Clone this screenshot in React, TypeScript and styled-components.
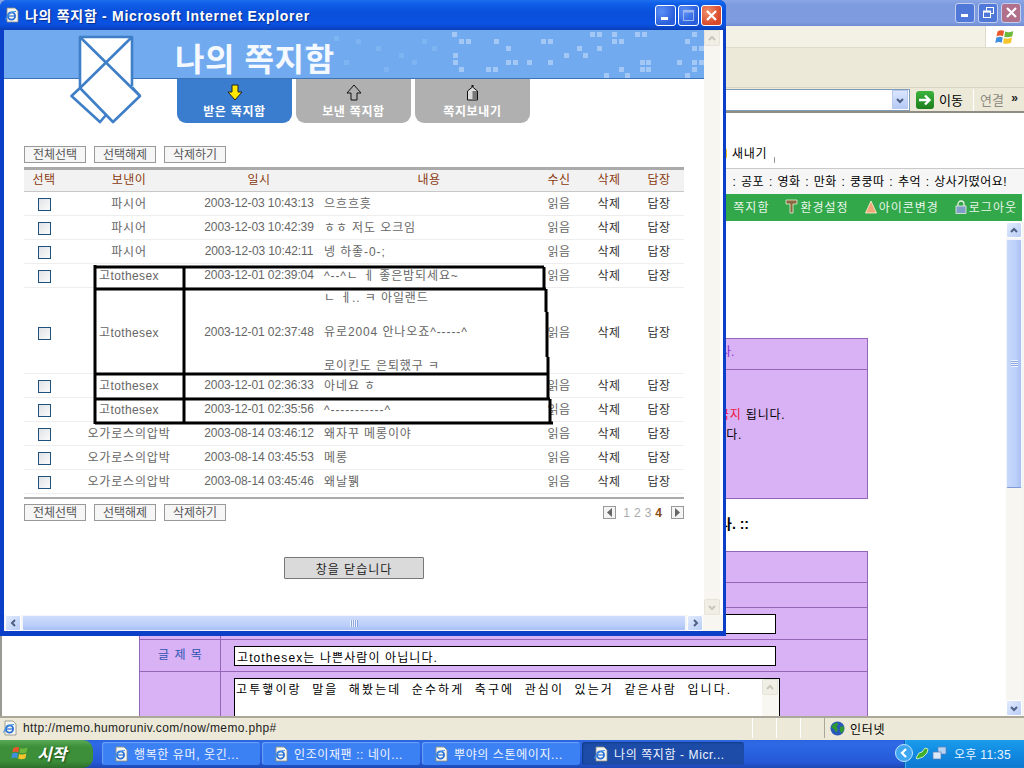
import React from "react";
import styled, { createGlobalStyle } from "styled-components";

const GlobalStyle = createGlobalStyle`
  html, body {
    margin: 0;
    padding: 0;
    background: #fff;
  }
  body {
    font-family: "Liberation Sans", "Noto Sans CJK KR", sans-serif;
    font-size: 12px;
    color: #000;
  }
  * {
    box-sizing: border-box;
  }
`;

const Desktop = styled.div`
  position: relative;
  width: 1024px;
  height: 768px;
  overflow: hidden;
  display: flex;
  flex-direction: column;
`;

/* window behind the popup */
const BackTitle = styled.div`
  height: 26px;
  flex: none;
  display: flex;
  justify-content: flex-end;
  align-items: center;
  gap: 3px;
  padding: 0 3px 1px 0;
  background: linear-gradient(#8aa6e6, #7c9ade 20%, #7f9ce0 85%, #6f8cd2);
`;

const MenuBar = styled.div`
  height: 22px;
  flex: none;
  display: flex;
  justify-content: flex-end;
  background: #f3f0e6;
  border-bottom: 1px solid #dedbcb;
`;

const FlagBox = styled.div`
  width: 39px;
  background: #fff;
  border-left: 1px solid #dedbcb;
  display: flex;
  align-items: center;
  justify-content: center;
`;

const ToolBar = styled.div`
  height: 40px;
  flex: none;
  background: #ece9d8;
  border-bottom: 1px solid #d8d4c2;
`;

const AddressBar = styled.div`
  height: 25px;
  flex: none;
  display: flex;
  align-items: center;
  background: #ece9d8;
  border-bottom: 2px solid #8f8d83;
`;

const AddressInput = styled.div`
  width: 910px;
  height: 22px;
  padding-right: 1px;
  display: flex;
  justify-content: flex-end;
  align-items: center;
  background: #fff;
  border: 1px solid #7f9db9;
`;

const ComboArrow = styled.div`
  width: 16px;
  height: 19px;
  display: flex;
  align-items: center;
  justify-content: center;
  background: linear-gradient(#dbe6fd, #b6caf5);
  border: 1px solid #b8c9ef;
`;

const GoButton = styled.div`
  margin-left: 6px;
  display: flex;
  align-items: center;
  gap: 5px;
  width: 57px;
  height: 22px;
  font-size: 13px;
`;

const GoIcon = styled.div`
  width: 18px;
  height: 18px;
  border-radius: 3px;
  background: linear-gradient(#3cb43c, #1c7d1c);
  display: flex;
  align-items: center;
  justify-content: center;
`;

const LinksLabel = styled.div`
  flex: 1;
  height: 22px;
  display: flex;
  align-items: center;
  justify-content: space-between;
  padding: 0 6px 0 6px;
  font-size: 13px;
  color: #8c8a80;
  border-left: 1px solid #fff;
`;

const Chevrons = styled.span`
  font-weight: bold;
  font-size: 12px;
  color: #222;
  margin-top: -4px;
`;

const TopFrame = styled.div`
  height: 109px;
  flex: none;
  display: flex;
  flex-direction: column;
  background: #fff;
`;

const MenuSlot = styled.div`
  height: 56px;
  flex: none;
  display: flex;
  align-items: flex-end;
  gap: 5px;
  padding: 0 0 7px 724px;
  font-size: 12px;
  letter-spacing: 0.7px;
  border-bottom: 1px solid #c9c9c9;
`;

const FolderEdge = styled.span`
  width: 3px;
  height: 9px;
  margin-bottom: 3px;
  background: #f2c230;
`;

const MenuTick = styled.span`
  width: 1px;
  height: 6px;
  margin-left: 2px;
  margin-bottom: -2px;
  background: #999;
`;

const NavStrip = styled.div`
  height: 25px;
  flex: none;
  padding: 0 17px 2px 0;
  display: flex;
  align-items: center;
  justify-content: flex-end;
  background: #f6f6f6;
  font-size: 12px;
  letter-spacing: 0.45px;
  word-spacing: 1px;
  white-space: nowrap;
`;

const GreenBar = styled.div`
  height: 27px;
  flex: none;
  margin-right: 2px;
  display: flex;
  align-items: center;
  justify-content: flex-end;
  padding: 0 5px 2px 0;
  gap: 16px;
  background: #33a84a;
  color: #e8f6ea;
  font-size: 12px;
  letter-spacing: 1px;
`;

const GreenItem = styled.span`
  display: inline-flex;
  align-items: center;
  gap: 2px;
`;

const LowerFrame = styled.div`
  flex: 1;
  min-height: 0;
  display: flex;
  background: #fff;
  border-left: 2px solid #9b9a92;
  border-right: 2px solid #f4f4f0;
`;

const PageArea = styled.div`
  flex: 1;
  min-width: 0;
  overflow: hidden;
  padding: 116px 0 0 137px;
`;

const PurpleBox = styled.div`
  width: 729px;
  background: #d8b2f4;
  border: 1px solid #9566b8;
`;

const NoticeHead = styled.div`
  height: 31px;
  padding: 3px 0 0 558px;
  color: #8b2fd0;
  border-bottom: 1px solid #9566b8;
`;

const NoticeBody = styled.div`
  height: 128px;
  padding: 35px 0 0 578px;
  line-height: 20px;
  letter-spacing: 0.8px;
  white-space: nowrap;
`;

const Red = styled.span`
  color: #f01040;
`;

const SectionHead = styled.div`
  height: 52px;
  padding: 14px 0 0 580px;
  font-size: 14px;
  font-weight: bold;
  white-space: nowrap;
`;

const FormRow = styled.div<{ $h: number }>`
  height: ${(p) => p.$h}px;
  display: grid;
  grid-template-columns: 81px 1fr;
  border-bottom: 1px solid #9566b8;
`;

const FormLabel = styled.div`
  display: flex;
  align-items: center;
  justify-content: center;
  color: #2f55b5;
  word-spacing: 2px;
  border-right: 1px solid #9566b8;
  padding-bottom: 4px;
`;

const FormField = styled.div`
  padding: 6px 0 0 13px;
`;

const TextBox = styled.div`
  width: 542px;
  height: 20px;
  padding-left: 2px;
  display: flex;
  align-items: center;
  letter-spacing: 1.1px;
  background: #fff;
  border: 1px solid #000;
  white-space: nowrap;
`;

const TextArea = styled.div`
  width: 546px;
  height: 60px;
  display: flex;
  justify-content: space-between;
  background: #fff;
  border: 1px solid #000;
`;

const TextAreaText = styled.div`
  padding: 1px 0 0 1px;
  letter-spacing: 2.1px;
  word-spacing: 5px;
  white-space: nowrap;
`;

const TextAreaBar = styled.div`
  width: 17px;
  background: #f8f7f1;
`;

/* scrollbars */
const VBar = styled.div`
  width: 16px;
  flex: none;
  display: flex;
  flex-direction: column;
  background: #f7f6f0;
`;

const ScrollBtn = styled.div<{ $muted?: boolean }>`
  width: 16px;
  height: 16px;
  flex: none;
  display: flex;
  align-items: center;
  justify-content: center;
  border-radius: 2px;
  background: ${(p) =>
    p.$muted ? "#f0efe6" : "linear-gradient(135deg, #e2ebfe, #b9cdf7)"};
  border: 1px solid ${(p) => (p.$muted ? "#e6e4d8" : "#fff")};
`;

const VThumb = styled.div`
  width: 16px;
  height: 249px;
  margin-top: 1px;
  flex: none;
  display: flex;
  align-items: center;
  justify-content: center;
  border-radius: 2px;
  background: linear-gradient(90deg, #c8d8fb, #bcd0fa 60%, #aac0f2);
  border: 1px solid #f2f5ff;
  border-bottom-color: #7f9ad8;
`;

const VSpacer = styled.div`
  flex: 1;
`;

const HBar = styled.div`
  height: 16px;
  flex: none;
  display: flex;
  align-items: center;
  gap: 1px;
  padding-left: 1px;
  background: #f7f6f0;
`;

const HThumb = styled.div`
  width: 664px;
  height: 16px;
  display: flex;
  align-items: center;
  justify-content: center;
  border-radius: 2px;
  background: linear-gradient(#cfdcfb, #bcd0fa 60%, #a9c0f3);
  border: 1px solid #f2f5ff;
`;

const Grip = styled.div<{ $vertical?: boolean }>`
  width: ${(p) => (p.$vertical ? 7 : 8)}px;
  height: 7px;
  background: ${(p) =>
    p.$vertical
      ? "repeating-linear-gradient(#eef3ff 0 1px, #8ca6e0 1px 2px)"
      : "repeating-linear-gradient(90deg, #eef3ff 0 1px, #8ca6e0 1px 2px)"};
`;

/* status and task bars */
const StatusBar = styled.div`
  height: 24px;
  flex: none;
  display: flex;
  align-items: center;
  padding-bottom: 2px;
  background: #ece9d8;
  border-top: 2px solid #aca899;
`;

const StatusUrl = styled.div`
  width: 752px;
  display: flex;
  align-items: center;
  gap: 5px;
  padding-left: 2px;
  color: #222;
  font-size: 12px;
  letter-spacing: 0.35px;
`;

const StatusCell = styled.div`
  width: 24px;
  height: 20px;
  border-left: 1px solid #fff;
`;

const StatusZone = styled.div`
  flex: 1;
  height: 20px;
  display: flex;
  align-items: center;
  gap: 5px;
  padding-left: 5px;
  border-left: 1px solid #aca899;
  font-size: 12px;
  letter-spacing: 0.7px;
`;

const TaskBar = styled.div`
  height: 28px;
  flex: none;
  display: flex;
  align-items: stretch;
  background: linear-gradient(#2a63dd, #2f6ae6 12%, #2458d6 80%, #1d48b4);
`;

const StartButton = styled.div`
  width: 93px;
  flex: none;
  margin-right: 9px;
  display: flex;
  align-items: center;
  gap: 8px;
  padding: 0 0 2px 11px;
  color: #fff;
  font-size: 16px;
  font-weight: bold;
  font-style: italic;
  text-shadow: 1px 1px 2px #14460f;
  border-radius: 0 10px 10px 0;
  background: linear-gradient(#5aa956, #3d8f3a 25%, #3c8e39 75%, #2d6f2c);
`;

const TaskButtons = styled.div`
  flex: 1;
  display: flex;
  gap: 2px;
  padding: 2px 0 3px;
`;

const TaskButton = styled.div<{ $active?: boolean }>`
  width: ${(p) => (p.$active ? 162 : 158)}px;
  display: flex;
  align-items: center;
  gap: 5px;
  padding-left: 11px;
  color: #f0f4ff;
  font-size: 12px;
  letter-spacing: 0.6px;
  white-space: nowrap;
  border-radius: 3px;
  background: ${(p) => (p.$active ? "#1c4ca8" : "#3c81f3")};
  box-shadow: ${(p) =>
    p.$active ? "inset 1px 1px 2px #123a85" : "inset 1px 1px 1px #6ea0f8"};
`;

const Tray = styled.div`
  width: 120px;
  flex: none;
  display: flex;
  align-items: center;
  gap: 2px;
  padding-bottom: 2px;
  margin-left: auto;
  color: #e8f4ff;
  background: linear-gradient(#1a9cec, #1089e0 50%, #0f78cf);
  border-left: 1px solid #0d5fb3;
  box-shadow: inset 1px 0 1px #3ab0f5;
`;

const TrayChevron = styled.svg`
  margin-left: -10px;
  flex: none;
`;

const TrayClock = styled.span`
  margin-left: 5px;
  font-size: 12px;
  letter-spacing: 0.3px;
  white-space: nowrap;
`;

/* popup window */
const Popup = styled.div`
  position: absolute;
  left: 0;
  top: 0;
  width: 726px;
  height: 636px;
  display: flex;
  flex-direction: column;
  border-radius: 7px 7px 0 0;
  background: #0b3fc8;
`;

const PopupTitle = styled.div`
  height: 30px;
  flex: none;
  display: flex;
  align-items: center;
  gap: 5px;
  padding: 0 4px 0 4px;
  color: #fff;
  font-size: 14px;
  font-weight: bold;
  letter-spacing: 0.7px;
  text-shadow: 1px 1px 1px #0a2f90;
  border-radius: 7px 7px 0 0;
  background: linear-gradient(#1f6ff0, #0f5fe8 12%, #0a50dc 40%, #0a52e2 80%, #0a3fb8);
`;

const TitleText = styled.span`
  flex: 1;
  white-space: nowrap;
`;

const WinButtons = styled.div`
  display: flex;
  gap: 2px;
`;

const WinBtn = styled.div<{ $close?: boolean; $faded?: boolean }>`
  width: ${(p) => (p.$faded ? 20 : 21)}px;
  height: ${(p) => (p.$faded ? 20 : 21)}px;
  display: flex;
  align-items: center;
  justify-content: center;
  border-radius: 3px;
  border: 1px solid ${(p) => (p.$faded ? "#c4cff0" : "#fff")};
  background: ${(p) =>
    p.$close
      ? p.$faded
        ? "#b0708c"
        : "radial-gradient(circle at 30% 30%, #f0906c, #d8482a 70%)"
      : p.$faded
        ? "#4f78d8"
        : "radial-gradient(circle at 30% 30%, #5c90f6, #2a5fdc 70%)"};
`;

const PopupClient = styled.div`
  flex: 1;
  min-height: 0;
  margin: 0 3px 5px 4px;
  display: flex;
  flex-direction: column;
  background: #fff;
`;

const ClientRow = styled.div`
  flex: 1;
  min-height: 0;
  display: flex;
`;

const PopupMain = styled.div`
  position: relative;
  width: 700px;
  flex: none;
  display: flex;
  flex-direction: column;
  background: #fff;
`;

const Banner = styled.div`
  position: relative;
  height: 49px;
  flex: none;
  padding-left: 171px;
  overflow: hidden;
  background: #72aaf0;
  border-bottom: 1px solid #3d74b8;
`;

const BannerDots = styled.svg`
  position: absolute;
  left: 0;
  top: 0;
`;

const BannerTitle = styled.h1`
  position: relative;
  margin: 0;
  color: #f4f9ff;
  font-size: 32px;
  line-height: 60px;
  font-weight: bold;
  letter-spacing: 0.6px;
  white-space: nowrap;
`;

const LogoMark = styled.svg`
  position: absolute;
  left: 64px;
  top: 4px;
`;

const Tabs = styled.div`
  display: flex;
  gap: 4px;
  flex: none;
  height: 44px;
  padding-left: 173px;
`;

const Tab = styled.div<{ $active?: boolean }>`
  width: 115px;
  display: flex;
  flex-direction: column;
  align-items: center;
  padding-top: 5px;
  gap: 1px;
  color: #fff;
  font-size: 12px;
  font-weight: bold;
  letter-spacing: 0.7px;
  border-radius: 0 0 9px 9px;
  background: ${(p) => (p.$active ? "#3a7dce" : "#b0b0b0")};
`;

const Content = styled.div`
  padding: 0 20px;
  display: flex;
  flex-direction: column;
`;

const ActionRow = styled.div<{ $top: number }>`
  margin-top: ${(p) => p.$top}px;
  display: flex;
  align-items: center;
  gap: 8px;
`;

const SmallButton = styled.div`
  width: 62px;
  height: 17px;
  padding-bottom: 2px;
  display: flex;
  align-items: center;
  justify-content: center;
  color: #555;
  background: #f6f6f6;
  border: 1px solid #999;
`;

const Pager = styled.div`
  margin-left: auto;
  display: flex;
  align-items: center;
  gap: 4px;
  color: #aaa;
  font-size: 12px;
`;

const PagerBtn = styled.div<{ $next?: boolean }>`
  width: 13px;
  height: 13px;
  display: flex;
  align-items: center;
  justify-content: center;
  background: #f4f4f4;
  border: 1px solid #999;
  margin: ${(p) => (p.$next ? "0 0 0 5px" : "0 3px 0 0")};
`;

const PagerCurrent = styled.b`
  color: #8a4a10;
`;

const MemoTable = styled.div`
  margin-top: 4px;
  display: flex;
  flex-direction: column;
`;

const columns = "40px 130px 130px 210px 50px 50px 50px";

const HeaderRow = styled.div`
  height: 25px;
  display: grid;
  grid-template-columns: ${columns};
  align-items: center;
  text-align: center;
  color: #8a3a10;
  letter-spacing: 0.5px;
  background: #f2f2f2;
  border-top: 3px solid #aaa;
  border-bottom: 1px solid #c8c8c8;
  padding-bottom: 4px;
`;

const Row = styled.div<{ $tall?: boolean }>`
  height: ${(p) => (p.$tall ? 86 : 24)}px;
  display: grid;
  grid-template-columns: ${columns};
  align-items: center;
  text-align: center;
  color: #666;
  letter-spacing: 0.5px;
  border-bottom: 1px solid #eeeeee;
  padding-bottom: ${(p) => (p.$tall ? 6 : 3)}px;
`;

const CheckBox = styled.input`
  appearance: none;
  width: 13px;
  height: 13px;
  margin: 3px auto 0;
  border: 1px solid #1c5180;
  background: linear-gradient(135deg, #dfe3e6, #fbfbf9);
`;

const SenderCell = styled.div<{ $latin: boolean }>`
  letter-spacing: ${(p) => (p.$latin ? 0.4 : 0.85)}px;
`;

const DateCell = styled.div`
  letter-spacing: -0.1px;
`;

const MemoText = styled.div<{ $tall?: boolean }>`
  margin-top: ${(p) => (p.$tall ? 2 : 4)}px;
  text-align: left;
  line-height: 17px;
  letter-spacing: 0.9px;
  white-space: pre;
`;

const DeleteCell = styled.div`
  color: #333;
`;

const Rule = styled.div`
  margin-top: 3px;
  height: 2px;
  background: #aaa;
`;

const CloseRow = styled.div`
  margin-top: 36px;
  display: flex;
  justify-content: center;
`;

const CloseButton = styled.div`
  width: 140px;
  height: 22px;
  display: flex;
  align-items: center;
  justify-content: center;
  color: #222;
  letter-spacing: 1px;
  background: #dadada;
  border: 1px solid #777;
  border-radius: 1px;
`;

const MarkerLayer = styled.svg`
  position: absolute;
  left: 0;
  top: 0;
  pointer-events: none;
`;

type Memo = {
  sender: string;
  date: string;
  text: string;
  tall?: boolean;
};

const memos: Memo[] = [
  { sender: "파시어", date: "2003-12-03 10:43:13", text: "으흐흐흣" },
  { sender: "파시어", date: "2003-12-03 10:42:39", text: "ㅎㅎ 저도 오크임" },
  { sender: "파시어", date: "2003-12-03 10:42:11", text: "넹 하좋-0-;" },
  { sender: "고tothesex", date: "2003-12-01 02:39:04", text: "^--^ㄴ ㅔ 좋은밤되세요~" },
  {
    sender: "고tothesex",
    date: "2003-12-01 02:37:48",
    text: "ㄴ ㅔ.. ㅋ 아일랜드\n\n유로2004 안나오죠^-----^\n\n로이킨도 은퇴했구 ㅋ",
    tall: true,
  },
  { sender: "고tothesex", date: "2003-12-01 02:36:33", text: "아네요 ㅎ" },
  { sender: "고tothesex", date: "2003-12-01 02:35:56", text: "^-----------^" },
  { sender: "오가로스의압박", date: "2003-08-14 03:46:12", text: "왜자꾸 메롱이야" },
  { sender: "오가로스의압박", date: "2003-08-14 03:45:53", text: "메롱" },
  { sender: "오가로스의압박", date: "2003-08-14 03:45:46", text: "왜날뷁" },
];

// spots of the banner pattern, in banner coordinates
const dots = [
  [448, 2], [455, 9], [462, 9], [490, 9], [502, 16], [449, 23], [449, 30], [502, 30],
  [509, 30], [523, 30], [544, 30], [537, 9], [544, 9], [573, 16], [593, 16], [560, 23],
  [579, 23], [586, 2], [593, 2], [608, 2], [608, 9], [615, 9], [631, 2], [638, 2],
  [688, 2], [681, 9], [688, 16], [695, 16], [636, 30], [642, 30], [636, 37], [642, 37],
  [673, 30], [688, 30], [695, 30], [688, 37], [615, 37], [455, 37], [482, 37], [489, 37],
  [600, 43], [621, 43], [681, 43],
];

const fadedDots = [
  [330, 6], [352, 9], [372, 16], [395, 23], [418, 9], [340, 30], [380, 37], [408, 30],
  [300, 16], [428, 16],
];

const Arrow = ({ dir, color = "#4d6185" }: { dir: "up" | "down" | "left" | "right"; color?: string }) => {
  const points = {
    up: "2,7 5,4 8,7",
    down: "2,4 5,7 8,4",
    left: "7,2 4,5 7,8",
    right: "4,2 7,5 4,8",
  }[dir];
  return (
    <svg width="10" height="10" viewBox="0 0 10 10">
      <polyline points={points} fill="none" stroke={color} strokeWidth="2" />
    </svg>
  );
};

const PagerArrow = ({ right }: { right?: boolean }) => (
  <svg width="7" height="9" viewBox="0 0 7 9">
    <polygon points={right ? "1,0 6,4.5 1,9" : "6,0 1,4.5 6,9"} fill="#666" />
  </svg>
);

const IeIcon = ({ size = 16 }: { size?: number }) => (
  <svg width={size} height={size} viewBox="0 0 16 16">
    <path d="M3 1h8l3 3v11H3z" fill="#f7f7f2" stroke="#8b8b80" strokeWidth="0.8" />
    <circle cx="7.5" cy="9" r="3.6" fill="none" stroke="#2a6fd6" strokeWidth="1.8" />
    <path d="M4 9h7" stroke="#2a6fd6" strokeWidth="1.2" />
    <path d="M1.5 12.5C3 8 8 4 12 4.5" fill="none" stroke="#3f93e6" strokeWidth="1.1" />
  </svg>
);

const XpFlag = ({ size = 16 }: { size?: number }) => (
  <svg width={size} height={size} viewBox="0 0 16 16">
    <path d="M2 3.5Q5 2 7.3 3.2L6.4 7.4Q4 6.2 1.2 7.6z" fill="#e8582c" />
    <path d="M8.2 3.6Q11 5 14.6 3.2L13.8 7.4Q10.6 9 7.4 7.7z" fill="#6cb83a" />
    <path d="M1 8.6Q3.8 7.2 6.2 8.4L5.4 12.6Q3 11.4 0.2 12.8z" fill="#3f8fe0" />
    <path d="M7.2 8.8Q10.4 10 13.6 8.4L12.8 12.6Q9.8 14.2 6.4 12.9z" fill="#f6c52c" />
  </svg>
);

const Globe = () => (
  <svg width="15" height="15" viewBox="0 0 15 15">
    <circle cx="7.5" cy="7.5" r="7" fill="#2a58b8" />
    <path d="M3 3.5l4-2 1.5 2-2 2 1.5 3-2 3-2-3.5-2.5-1.5zM10 6l3.6-1 .6 4-3 3.5-1.4-3z" fill="#2f9a2f" />
  </svg>
);

const MinGlyph = () => (
  <svg width="11" height="11" viewBox="0 0 11 11">
    <rect x="1" y="7" width="7" height="3" fill="#fff" />
  </svg>
);

const MaxGlyph = ({ color = "#fff" }: { color?: string }) => (
  <svg width="13" height="13" viewBox="0 0 13 13">
    <rect x="1.5" y="1.5" width="10" height="10" fill="none" stroke={color} />
    <rect x="1.5" y="1.5" width="10" height="2" fill={color} />
  </svg>
);

const RestoreGlyph = () => (
  <svg width="13" height="13" viewBox="0 0 13 13">
    <rect x="4.5" y="1.5" width="7" height="6" fill="none" stroke="#fff" />
    <rect x="1.5" y="5" width="7" height="6.5" fill="#4f78d8" stroke="#fff" />
    <rect x="1.5" y="5" width="7" height="1.6" fill="#fff" />
  </svg>
);

const CloseGlyph = () => (
  <svg width="13" height="13" viewBox="0 0 13 13">
    <path d="M2 2l9 9M11 2l-9 9" stroke="#fff" strokeWidth="2.2" />
  </svg>
);

const App = () => {
  return (
    <Desktop>
      <GlobalStyle />
      <BackTitle>
        <WinBtn $faded>
          <MinGlyph />
        </WinBtn>
        <WinBtn $faded>
          <RestoreGlyph />
        </WinBtn>
        <WinBtn $faded $close>
          <CloseGlyph />
        </WinBtn>
      </BackTitle>
      <MenuBar>
        <FlagBox>
          <XpFlag size={20} />
        </FlagBox>
      </MenuBar>
      <ToolBar />
      <AddressBar>
        <AddressInput>
          <ComboArrow>
            <Arrow dir="down" />
          </ComboArrow>
        </AddressInput>
        <GoButton>
          <GoIcon>
            <svg width="14" height="14" viewBox="0 0 14 14">
              <path d="M1 7h10M7 2.5L11.5 7 7 11.5" fill="none" stroke="#fff" strokeWidth="2.4" />
            </svg>
          </GoIcon>
          이동
        </GoButton>
        <LinksLabel>
          연결
          <Chevrons>»</Chevrons>
        </LinksLabel>
      </AddressBar>

      <TopFrame>
        <MenuSlot>
          <FolderEdge />
          새내기
          <MenuTick />
        </MenuSlot>
        <NavStrip>: 공포 : 영화 : 만화 : 쿵쿵따 : 추억 : 상사가떴어요!</NavStrip>
        <GreenBar>
          <GreenItem>쪽지함</GreenItem>
          <GreenItem>
            <svg width="13" height="15" viewBox="0 0 13 15">
              <path d="M1 1h11v4H8v9H5V5H1z" fill="#8a6a3a" stroke="#e6efe0" strokeWidth="0.8" />
            </svg>
            환경설정
          </GreenItem>
          <GreenItem>
            <svg width="12" height="14" viewBox="0 0 12 14">
              <path d="M6 1l5.5 12H.5z" fill="#f2a878" stroke="#fff1d8" strokeWidth="0.8" />
            </svg>
            아이콘변경
          </GreenItem>
          <GreenItem>
            <svg width="12" height="14" viewBox="0 0 12 14">
              <path d="M3 6V4a3 3 0 0 1 6 0v2" fill="none" stroke="#e6efe0" strokeWidth="1.3" />
              <rect x="1" y="6" width="10" height="7.5" fill="#7f9fc8" stroke="#e6efe0" strokeWidth="0.8" />
            </svg>
            로그아웃
          </GreenItem>
        </GreenBar>
      </TopFrame>

      <LowerFrame>
        <PageArea>
          <PurpleBox>
            <NoticeHead>합니다.</NoticeHead>
            <NoticeBody>
              <Red>금지</Red> 됩니다.
              <br />
              &nbsp;&nbsp;다.
            </NoticeBody>
          </PurpleBox>
          <SectionHead>나. ::</SectionHead>
          <PurpleBox>
            <FormRow $h={31} />
            <FormRow $h={25} />
            <FormRow $h={32}>
              <FormLabel />
              <FormField>
                <TextBox />
              </FormField>
            </FormRow>
            <FormRow $h={32}>
              <FormLabel>글 제 목</FormLabel>
              <FormField>
                <TextBox>고tothesex는 나쁜사람이 아닙니다.</TextBox>
              </FormField>
            </FormRow>
            <FormRow $h={60}>
              <FormLabel />
              <FormField>
                <TextArea>
                  <TextAreaText>고투햏이랑 말을 해봤는데 순수하게 축구에 관심이 있는거 같은사람 입니다.</TextAreaText>
                  <TextAreaBar>
                    <ScrollBtn $muted>
                      <Arrow dir="up" color="#c9c7b8" />
                    </ScrollBtn>
                  </TextAreaBar>
                </TextArea>
              </FormField>
            </FormRow>
          </PurpleBox>
        </PageArea>
        <VBar>
          <ScrollBtn>
            <Arrow dir="up" />
          </ScrollBtn>
          <VThumb>
            <Grip $vertical />
          </VThumb>
          <VSpacer />
          <ScrollBtn>
            <Arrow dir="down" />
          </ScrollBtn>
        </VBar>
      </LowerFrame>

      <StatusBar>
        <StatusUrl>
          <IeIcon />
          http://memo.humoruniv.com/now/memo.php#
        </StatusUrl>
        <StatusCell />
        <StatusCell />
        <StatusCell />
        <StatusZone>
          <Globe />
          인터넷
        </StatusZone>
      </StatusBar>

      <TaskBar>
        <StartButton>
          <XpFlag size={18} />
          시작
        </StartButton>
        <TaskButtons>
          <TaskButton>
            <IeIcon />
            행복한 유머, 웃긴...
          </TaskButton>
          <TaskButton>
            <IeIcon />
            인조이재팬 :: 네이...
          </TaskButton>
          <TaskButton>
            <IeIcon />
            뿌야의 스톤에이지...
          </TaskButton>
          <TaskButton $active>
            <IeIcon />
            나의 쪽지함 - Micr...
          </TaskButton>
        </TaskButtons>
        <Tray>
          <TrayChevron width="18" height="18" viewBox="0 0 18 18">
            <circle cx="9" cy="9" r="8.5" fill="#3fa6f2" stroke="#bfe4ff" />
            <polyline points="11,5 7,9 11,13" fill="none" stroke="#fff" strokeWidth="2.2" />
          </TrayChevron>
          <svg width="15" height="14" viewBox="0 0 15 14">
            <path d="M1 12l3-5 3-1 3-4 3 1-1 4-4 4-6 2z" fill="#3fb02a" stroke="#e8f8d8" strokeWidth="0.8" />
          </svg>
          <svg width="15" height="15" viewBox="0 0 15 15">
            <rect x="6" y="1" width="8" height="7" fill="#b9d3f2" stroke="#5b7fb8" strokeWidth="0.7" />
            <rect x="1" y="6" width="8" height="7" fill="#dbe8f8" stroke="#5b7fb8" strokeWidth="0.7" />
          </svg>
          <TrayClock>오후 11:35</TrayClock>
        </Tray>
      </TaskBar>

      <Popup>
        <PopupTitle>
          <IeIcon />
          <TitleText>나의 쪽지함 - Microsoft Internet Explorer</TitleText>
          <WinButtons>
            <WinBtn>
              <MinGlyph />
            </WinBtn>
            <WinBtn>
              <MaxGlyph color="#9db8f0" />
            </WinBtn>
            <WinBtn $close>
              <CloseGlyph />
            </WinBtn>
          </WinButtons>
        </PopupTitle>
        <PopupClient>
          <ClientRow>
            <PopupMain>
              <Banner>
                <BannerDots width="700" height="48">
                  {fadedDots.map(([x, y]) => (
                    <rect key={`${x}-${y}`} x={x} y={y} width="5" height="5" fill="#7fb4f2" />
                  ))}
                  {dots.map(([x, y]) => (
                    <rect key={`${x}-${y}`} x={x} y={y} width="5" height="5" fill="#a3c8f6" />
                  ))}
                </BannerDots>
                <BannerTitle>나의 쪽지함</BannerTitle>
              </Banner>
              <LogoMark width="74" height="92" viewBox="64 4 74 92">
                <path d="M76 7H128V57L136 66 109 92 102 85 96 92 67.5 66 76 58z" fill="#fff" />
                <g fill="none" stroke="#3f7fc8" strokeWidth="2.6" strokeLinejoin="round">
                  <path d="M76 58V7H128V56" />
                  <path d="M76 7L136 66M128 7L76 58" />
                  <path d="M76 58L67.5 66 96 92 102 85M76 58L109 92 136 66 128 57" />
                </g>
              </LogoMark>
              <Tabs>
                <Tab $active>
                  <svg width="16" height="17" viewBox="0 0 16 17">
                    <path d="M5 1h6v7h4l-7 8-7-8h4z" fill="#ffe800" stroke="#222" />
                  </svg>
                  받은 쪽지함
                </Tab>
                <Tab>
                  <svg width="16" height="17" viewBox="0 0 16 17">
                    <path d="M5 16h6V9h4L8 1 1 9h4z" fill="#b0b0b0" stroke="#111" />
                  </svg>
                  보낸 쪽지함
                </Tab>
                <Tab>
                  <svg width="13" height="17" viewBox="0 0 13 17">
                    <path d="M6.5 1v2" stroke="#111" strokeWidth="2" />
                    <path d="M1.5 16V7L6.5 3l5 4v9z" fill="#ddd" stroke="#111" />
                    <rect x="6.5" y="7" width="4.5" height="8.5" fill="#777" />
                  </svg>
                  쪽지보내기
                </Tab>
              </Tabs>
              <Content>
                <ActionRow $top={23}>
                  <SmallButton>전체선택</SmallButton>
                  <SmallButton>선택해제</SmallButton>
                  <SmallButton>삭제하기</SmallButton>
                </ActionRow>
                <MemoTable>
                  <HeaderRow>
                    <div>선택</div>
                    <div>보낸이</div>
                    <div>일시</div>
                    <div>내용</div>
                    <div>수신</div>
                    <div>삭제</div>
                    <div>답장</div>
                  </HeaderRow>
                  {memos.map((memo) => (
                    <Row key={memo.date} $tall={memo.tall}>
                      <CheckBox type="checkbox" readOnly />
                      <SenderCell $latin={/[a-z]/.test(memo.sender)}>{memo.sender}</SenderCell>
                      <DateCell>{memo.date}</DateCell>
                      <MemoText $tall={memo.tall}>{memo.text}</MemoText>
                      <div>읽음</div>
                      <DeleteCell>삭제</DeleteCell>
                      <DeleteCell>답장</DeleteCell>
                    </Row>
                  ))}
                </MemoTable>
                <Rule />
                <ActionRow $top={5}>
                  <SmallButton>전체선택</SmallButton>
                  <SmallButton>선택해제</SmallButton>
                  <SmallButton>삭제하기</SmallButton>
                  <Pager>
                    <PagerBtn>
                      <PagerArrow />
                    </PagerBtn>
                    <span>1</span>
                    <span>2</span>
                    <span>3</span>
                    <PagerCurrent>4</PagerCurrent>
                    <PagerBtn $next>
                      <PagerArrow right />
                    </PagerBtn>
                  </Pager>
                </ActionRow>
                <CloseRow>
                  <CloseButton>창을 닫습니다</CloseButton>
                </CloseRow>
              </Content>
            </PopupMain>
            <VBar>
              <ScrollBtn $muted>
                <Arrow dir="up" color="#c9c7b8" />
              </ScrollBtn>
              <VSpacer />
              <ScrollBtn $muted>
                <Arrow dir="down" color="#c9c7b8" />
              </ScrollBtn>
            </VBar>
          </ClientRow>
          <HBar>
            <ScrollBtn>
              <Arrow dir="left" />
            </ScrollBtn>
            <HThumb>
              <Grip />
            </HThumb>
            <ScrollBtn>
              <Arrow dir="right" />
            </ScrollBtn>
          </HBar>
        </PopupClient>
        {/* marker strokes drawn over the screenshot */}
        <MarkerLayer width="726" height="636">
          <g fill="none" stroke="#000" strokeWidth="3">
            <path d="M95 265V424M184 267V423" />
            <path d="M95 267H544M95 289H546M95 374H548M95 399H550M95 423H553" />
            <path d="M544 267V289M546 289V312M547 312V357M548 357V399M550 399V423" />
          </g>
        </MarkerLayer>
      </Popup>
    </Desktop>
  );
};

export default App;
